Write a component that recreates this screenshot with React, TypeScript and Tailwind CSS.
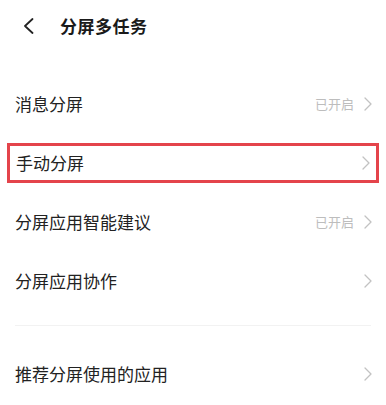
const font = { fontFamily: '"Noto Sans CJK SC", "Noto Sans", sans-serif' };

const Chevron = () => (
  <svg width="8" height="14" viewBox="0 0 8 14" fill="none">
    <polyline points="1,1 7,7 1,13" stroke="#c2c2c2" strokeWidth="1.3" strokeLinejoin="round" strokeLinecap="round" />
  </svg>
);

const Row = ({ label, status }: { label: string; status?: string }) => (
  <div className="flex h-[59px] items-center justify-between pl-[15px] pr-[14px]">
    <span className="text-[17px] text-[#222]">{label}</span>
    <div className="flex items-center gap-[10px]">
      {status && <span className="text-[13px] text-[#bdbdbd]">{status}</span>}
      <Chevron />
    </div>
  </div>
);

export default function App() {
  return (
    <div className="w-[386px] h-[405px] overflow-hidden bg-white" style={font}>
      <div className="flex h-[52px] items-center pl-[23px]">
        <svg width="11" height="16" viewBox="0 0 11 16" fill="none">
          <polyline points="9.5,1 2,8 9.5,15" stroke="#222" strokeWidth="1.8" strokeLinejoin="round" strokeLinecap="round" />
        </svg>
        <span className="ml-[26px] text-[17px] font-bold tracking-[0.5px] text-[#1a1a1a]">分屏多任务</span>
      </div>

      <div className="mt-[22px]">
        <Row label="消息分屏" status="已开启" />
        <div className="flex h-[59px] items-center px-[7px]">
          <div className="flex h-[40px] w-full items-center justify-between border-[3px] border-[#e4444b] pl-[6px] pr-[6px]">
            <span className="text-[17px] text-[#222]">手动分屏</span>
            <Chevron />
          </div>
        </div>
        <Row label="分屏应用智能建议" status="已开启" />
        <Row label="分屏应用协作" />
      </div>

      <div className="mx-[15px] mt-[15px] h-px bg-[#f2f2f2]" />

      <div className="mt-[18px]">
        <Row label="推荐分屏使用的应用" />
      </div>
    </div>
  );
}
